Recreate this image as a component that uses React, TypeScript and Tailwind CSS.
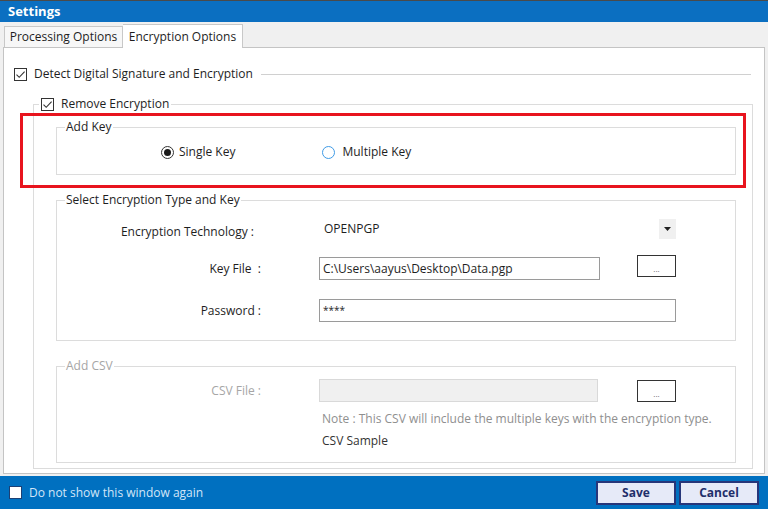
import React from "react";

const Check = ({ checked }: { checked?: boolean }) => (
  <span className="w-[13px] h-[13px] border border-[#333333] bg-white inline-flex items-center justify-center shrink-0">
    {checked && (
      <svg width="11" height="11" viewBox="0 0 11 11">
        <path d="M1.5 5.6 L4.2 8.3 L9.6 2.6" fill="none" stroke="#333333" strokeWidth="1.1" />
      </svg>
    )}
  </span>
);

const Radio = ({ checked }: { checked?: boolean }) => (
  <span
    className={
      checked
        ? "w-[13px] h-[13px] rounded-full border border-[#333333] bg-white inline-flex items-center justify-center shrink-0"
        : "w-[13px] h-[13px] rounded-full border border-[#3f9be6] bg-white inline-flex items-center justify-center shrink-0"
    }
  >
    {checked && <span className="w-[7px] h-[7px] rounded-full bg-[#1a1a1a]" />}
  </span>
);

const Browse = () => (
  <div className="w-[39px] h-[22px] border border-[#333333] bg-white flex items-end justify-center pb-[3px] text-[8px] leading-[8px] text-[#666666]">
    ...
  </div>
);

const App = () => {
  return (
    <div className="relative w-[768px] h-[509px] overflow-hidden bg-[#f0f0f0] flex flex-col font-['Open_Sans',sans-serif] text-[12px] text-[#1e1e1e]">
      {/* title bar */}
      <div className="h-[22px] bg-[#0b6fc1] border-t border-[#4a4a4a] flex items-center px-[8px] text-white font-bold text-[13px]">
        Settings
      </div>

      <div className="flex-1 flex flex-col pl-[3px] pr-[3px] pb-[2px]">
        {/* tabs */}
        <div className="h-[25px] flex items-end pl-[1px]">
          <div className="w-[119px] h-[21px] border border-b-0 border-[#c8c8c8] bg-[#f7f7f7] flex items-center justify-center">
            Processing Options
          </div>
          <div className="relative z-10 w-[120px] h-[24px] -mb-px border border-b-0 border-l-0 border-[#c8c8c8] bg-white flex items-center justify-center">
            Encryption Options
          </div>
        </div>

        {/* panel */}
        <div className="flex-1 border border-[#c4c4c4] bg-white">
          <div className="mt-[18px] ml-[10px] mr-[13px] h-[16px] flex items-center">
            <Check checked />
            <span className="ml-[7px]">Detect Digital Signature and Encryption</span>
            <span className="flex-1 h-px bg-[#d0d0d0] ml-[8px]" />
          </div>

          <fieldset className="mt-[14px] ml-[29px] mr-[11px] border border-[#dcdcdc]">
            <legend className="ml-[5px] px-[2px] h-[16px] flex items-center">
              <Check checked />
              <span className="ml-[7px]">Remove Encryption</span>
            </legend>
            <div className="pl-[22px] pr-[16px] pt-[7px] pb-[5px]">
              {/* add key */}
              <fieldset className="border border-[#dcdcdc]">
                <legend className="ml-[8px] px-[1px] leading-[16px]">Add Key</legend>
                <div className="h-[39px] pt-[9px]">
                  <div className="h-[16px] flex items-center pl-[104px]">
                    <Radio checked />
                    <span className="ml-[5px]">Single Key</span>
                    <span className="ml-[87px] inline-flex">
                      <Radio />
                    </span>
                    <span className="ml-[7px]">Multiple Key</span>
                  </div>
                </div>
              </fieldset>

              {/* select encryption type */}
              <fieldset className="mt-[17px] border border-[#dcdcdc]">
                <legend className="ml-[8px] px-[1px] leading-[16px]">Select Encryption Type and Key</legend>
                <div className="h-[132px] pt-[11px]">
                  <div className="h-[20px] flex items-center">
                    <span className="w-[204px] pr-[7px] pt-[6px] text-right">Encryption Technology :</span>
                    <div className="ml-[58px] w-[357px] h-[20px] flex items-center justify-between">
                      <span className="pl-[5px] pb-[1px]">OPENPGP</span>
                      <span className="w-[17px] h-[20px] bg-[#f0f0f0] flex items-center justify-center">
                        <svg width="7" height="4" viewBox="0 0 7 4">
                          <path d="M0 0 L7 0 L3.5 4 Z" fill="#222222" />
                        </svg>
                      </span>
                    </div>
                  </div>

                  <div className="mt-[16px] h-[25px] flex">
                    <span className="w-[204px] self-center pt-[2px] text-right">Key File&nbsp; :</span>
                    <div className="ml-[58px] self-end w-[281px] h-[23px] border border-[#9a9a9a] flex items-center px-[3px]">
                      C:\Users\aayus\Desktop\Data.pgp
                    </div>
                    <div className="ml-[37px] self-start">
                      <Browse />
                    </div>
                  </div>

                  <div className="mt-[19px] h-[23px] flex items-center">
                    <span className="w-[204px] text-right">Password :</span>
                    <div className="ml-[58px] w-[357px] h-[23px] border border-[#9a9a9a] flex items-center px-[3px] text-[10px]">
                      ****
                    </div>
                  </div>
                </div>
              </fieldset>

              {/* add csv */}
              <fieldset className="mt-[17px] border border-[#dcdcdc]">
                <legend className="ml-[8px] px-[1px] leading-[16px] text-[#a6a6a6]">Add CSV</legend>
                <div className="h-[88px] pt-[5px]">
                  <div className="h-[23px] flex items-center">
                    <span className="w-[204px] text-right text-[#a6a6a6]">CSV File :</span>
                    <div className="ml-[58px] w-[279px] h-[23px] border border-[#d9d9d9] bg-[#f0f0f0]" />
                    <div className="ml-[39px]">
                      <Browse />
                    </div>
                  </div>
                  <div className="mt-[9px] h-[16px] leading-[16px] pl-[265px] text-[#8f8f8f]">
                    Note : This CSV will include the multiple keys with the encryption type.
                  </div>
                  <div className="mt-[6px] h-[16px] leading-[16px] pl-[265px] text-[#333333]">CSV Sample</div>
                </div>
              </fieldset>
            </div>
          </fieldset>
        </div>
      </div>

      {/* footer */}
      <div className="h-[33px] bg-[#0070c0] flex items-center pl-[9px] pr-[9px]">
        <span className="w-[13px] h-[13px] bg-white border border-[#1d3f73]" />
        <span className="ml-[7px] text-[#d3e6f8]">Do not show this window again</span>
        <div className="ml-auto flex gap-[3px]">
          <button className="w-[80px] h-[24px] bg-[#e6eaf8] border-2 border-[#27367a] font-bold text-[#1f2f6b] text-[12px]">
            Save
          </button>
          <button className="w-[80px] h-[24px] bg-[#e6eaf8] border-2 border-[#27367a] font-bold text-[#1f2f6b] text-[12px]">
            Cancel
          </button>
        </div>
      </div>

      {/* red highlight annotation */}
      <div className="absolute left-[20px] top-[113px] w-[726px] h-[75px] border-[3px] border-[#e8141e] pointer-events-none" />
    </div>
  );
};

export default App;
